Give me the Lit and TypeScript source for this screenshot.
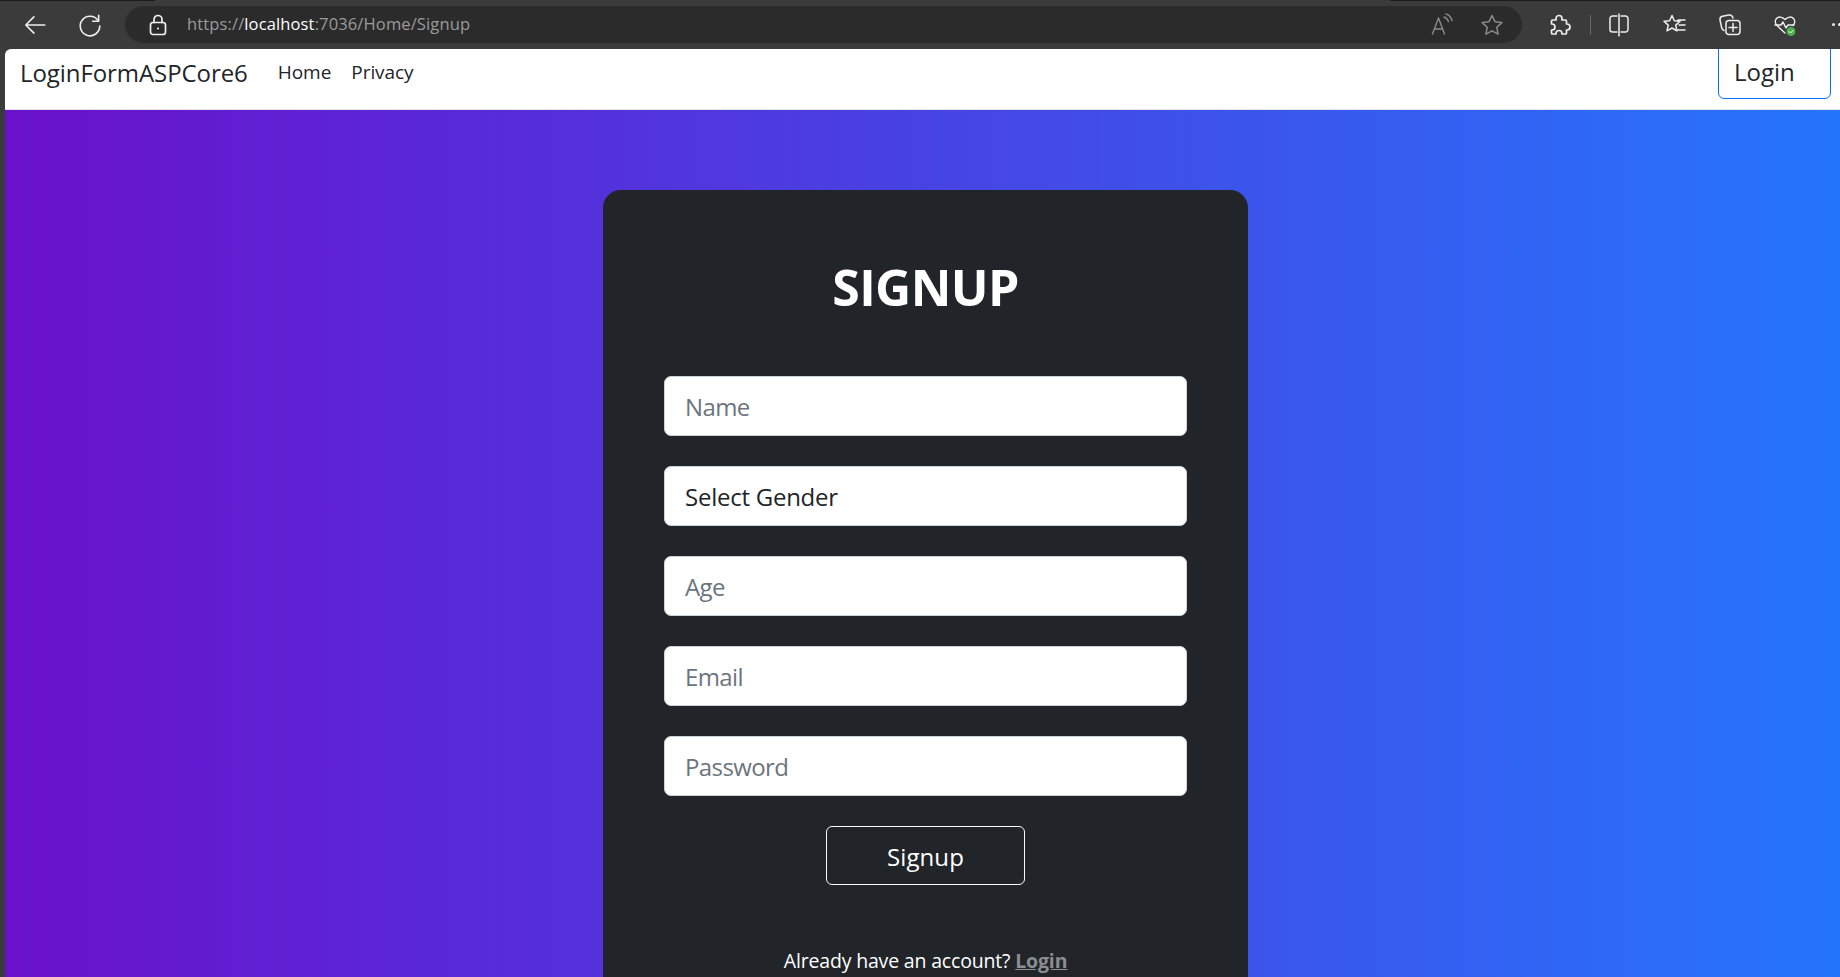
import { LitElement, html, css, svg } from "lit";
import { customElement } from "lit/decorators.js";

const ic = (body: unknown, cls = "ic", size = 24) =>
  html`<svg class=${cls} width=${size} height=${size} viewBox="0 0 24 24" fill="none" stroke="currentColor" stroke-width="1.5" stroke-linecap="round" stroke-linejoin="round">${body}</svg>`;

@customElement("app-root")
export class AppRoot extends LitElement {
  static styles = css`
    :host { display: block; height: 977px; overflow: hidden; background: #3b3b3b; font-family: "Open Sans", "Noto Sans", sans-serif; }
    * { box-sizing: border-box; }
    .chrome { height: 49px; display: flex; align-items: center; color: #eee; position: relative; z-index: 2; overflow: hidden; background: linear-gradient(to right, #1c1c1c 155px, #3b3b3b 155px, #3b3b3b 1390px, #1c1c1c 1390px) 0 0 / 100% 1px no-repeat, #3b3b3b; }
    .ic { flex: none; }
    .nav-ic { flex: none; display: flex; align-items: center; margin-left: 22px; gap: 29px; width: 103px; }
    .pill { flex: none; width: 1397px; height: 37px; border-radius: 19px; background: #2b2b2b; display: flex; align-items: center; padding-left: 21px; }
    .url { margin: -2px 0 0 17px; font-size: 16.5px; color: #9a9a9a; letter-spacing: 0.13px; }
    .url b { font-weight: 400; color: #fff; }
    .spacer { flex: 1; }
    .dim { color: #8a8a8a; }
    .star { margin: 0 18px 0 25px; }
    .tools { display: flex; align-items: center; margin-left: 25px; flex: none; }
    .sep { width: 1px; height: 20px; background: #666; margin: 0 16px 0 19px; }
    .gap { margin-left: 32px; }
    .gap2 { margin-left: 31px; }
    .dots { display: flex; gap: 3px; margin-left: 35px; }
    .dots i { width: 3px; height: 3px; border-radius: 50%; background: #eee; }
    .body { margin-left: 5px; height: 928px; display: flex; flex-direction: column; }
    nav { height: 61px; background: #fff; border-bottom: 1px solid #e4e4ea; border-top-left-radius: 6px; display: flex; align-items: flex-start; padding-left: 15px; color: #212529; }
    .brand { font-size: 24px; line-height: 33px; margin-top: 7px; letter-spacing: -0.07px; }
    .links { display: flex; gap: 20px; margin: 10px 0 0 30px; font-size: 19px; line-height: 26px; letter-spacing: -0.05px; }
    .login { margin-left: auto; margin-right: 9px; margin-top: -12px; width: 113px; height: 62px; border: 1px solid #0d6efd; border-radius: 6px; background: #fff; font-size: 24px; display: flex; align-items: flex-end; padding: 0 0 10px 15px; letter-spacing: 0; }
    main { flex: 1; background: linear-gradient(to right, #6a11cb, #2575fc); display: flex; justify-content: center; padding-top: 80px; overflow: hidden; }
    .card { width: 645px; height: 900px; flex: none; margin-left: 6px; background: #212529; border-radius: 18px; display: flex; flex-direction: column; align-items: center; padding-top: 69px; color: #fff; }
    h1 { margin: 0; font-size: 50px; font-weight: 700; line-height: 56px; letter-spacing: -0.6px; }
    form { display: flex; flex-direction: column; align-items: center; gap: 30px; margin-top: 61px; }
    .field { width: 523px; height: 60px; border-radius: 7px; background: #fff; border: 1px solid #ced4da; display: flex; align-items: center; padding-left: 20px; font-size: 24px; color: #6c757d; letter-spacing: -0.6px; }
    .field.sel { color: #212529; letter-spacing: -0.25px; }
    .btn { width: 199px; height: 59px; margin-top: 30px; padding-top: 1px; border: 1px solid #f8f9fa; border-radius: 6px; display: flex; align-items: center; justify-content: center; font-size: 24px; letter-spacing: 0.1px; }
    .foot { margin-top: 62px; font-size: 19.5px; line-height: 27px; letter-spacing: -0.17px; }
    .foot a { font-weight: 700; color: #8b8d90; text-decoration: underline; }
  `;

  render() {
    return html`
      <div class="chrome">
        <div class="nav-ic">
          ${ic(svg`<path d="M21 12H3.500M11 4.500 3.500 12l7.500 7.500"/>`, "ic", 26)}
          ${ic(svg`<path d="M19.500 8a9 9 0 1 0 1.500 5"/><path d="M20 3v5.500h-5.500"/>`, "ic", 26)}
        </div>
        <div class="pill">
          ${ic(svg`<rect x="4.500" y="9.500" width="15" height="12" rx="2.500" stroke-width="1.700"/><path d="M8 9.500V6.500a4 4 0 0 1 8 0v3" stroke-width="1.700"/><circle cx="12" cy="15.500" r="1.100" fill="currentColor" stroke="none"/>`)}
          <span class="url">https://<b>localhost</b>:7036/Home/Signup</span>
          <span class="spacer"></span>
          ${ic(svg`<path d="M1.500 21 7.500 5l6 16M3.500 16h8M13 4c2 .6 3.500 2 4.500 4.500M15 1c3 .8 5 3 6 6.500" stroke-width="1.400"/>`, "ic dim")}
          ${ic(svg`<path d="m12 2.500 3 6.200 6.800.9-5 4.700 1.300 6.800-6.100-3.300-6.100 3.300 1.300-6.800-5-4.700 6.800-.9z"/>`, "ic dim star")}
        </div>
        <div class="tools">
          ${ic(svg`<path d="M9 5.500a3 3 0 0 1 6 0V7h3.500a1 1 0 0 1 1 1v3h.5a3 3 0 0 1 0 6h-.5v3a1 1 0 0 1-1 1H15v-.5a3 3 0 0 0-6 0v.5H5.500a1 1 0 0 1-1-1v-3H5a3 3 0 0 0 0-6h-.5V8a1 1 0 0 1 1-1H9z" stroke-width="1.700"/>`)}
          <span class="sep"></span>
          ${ic(svg`<path d="M10 3H5.500A2.500 2.500 0 0 0 3 5.500v11A2.500 2.500 0 0 0 5.500 19H10M14 3h4.500A2.500 2.500 0 0 1 21 5.500v11a2.500 2.500 0 0 1-2.500 2.500H14M12 1v22"/>`)}
          ${ic(svg`<path d="M9 2.500l2.300 5.300 5.700.5-4.300 3.800 1.200 5.700L9 15l-5 2.800 1.200-5.700L1 8.300l5.600-.5zM15 7h7M16 12h6M15 17h7"/>`, "ic gap")}
          ${ic(svg`<path d="M6 17.500c-1.500-.5-2-1.500-2.300-2.700L2 7c-.3-2 .8-3.300 2.500-3.700L11 2c2-.2 3.500 1 4 3"/><rect x="8" y="7.500" width="14" height="14" rx="3"/><path d="M15 10.500v8M11 14.500h8"/>`, "ic gap2")}
          ${html`<svg class="ic gap2" width="24" height="24" viewBox="0 0 24 24" fill="none" stroke="currentColor" stroke-width="1.500" stroke-linecap="round" stroke-linejoin="round">
            <path d="M12 20 4 12.500C2 10.500 1.800 7.500 3.500 5.500 5.500 3.500 9 3.500 12 6.500c3-3 6.500-3 8.500-1 1.700 2 1.500 5-.5 7"/>
            <path d="M2 12h6l2-3 3 6 2-3h6"/>
            <circle cx="18" cy="18.500" r="5" fill="#4caf50" stroke="#3b3b3b" stroke-width="1"/>
            <path d="m16 18.500 1.500 1.500 2.500-2.500" stroke="#fff" stroke-width="1"/>
          </svg>`}
          <span class="dots"><i></i><i></i><i></i></span>
        </div>
      </div>
      <div class="body">
        <nav>
          <span class="brand">LoginFormASPCore6</span>
          <div class="links"><span>Home</span><span>Privacy</span></div>
          <span class="login">Login</span>
        </nav>
        <main>
          <div class="card">
            <h1>SIGNUP</h1>
            <form>
              <div class="field">Name</div>
              <div class="field sel">Select Gender</div>
              <div class="field">Age</div>
              <div class="field">Email</div>
              <div class="field">Password</div>
            </form>
            <div class="btn">Signup</div>
            <div class="foot">Already have an account? <a>Login</a></div>
          </div>
        </main>
      </div>
    `;
  }
}
